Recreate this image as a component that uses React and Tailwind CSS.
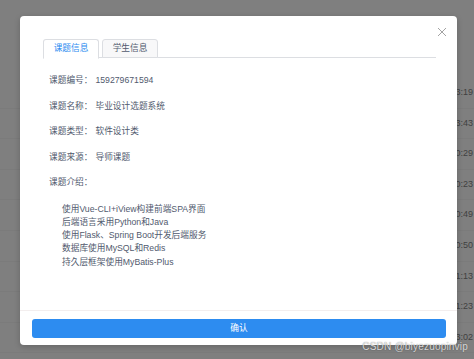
import React from "react";

const bgRows = ["3:19", "3:43", "0:29", "0:23", "0:49", "0:50", "1:13", "1:23", "3:02"];

const intro = [
  "使用Vue-CLI+iView构建前端SPA界面",
  "后端语言采用Python和Java",
  "使用Flask、Spring Boot开发后端服务",
  "数据库使用MySQL和Redis",
  "持久层框架使用MyBatis-Plus",
];

const rows = [
  ["课题编号：", "159279671594"],
  ["课题名称：", "毕业设计选题系统"],
  ["课题类型：", "软件设计类"],
  ["课题来源：", "导师课题"],
  ["课题介绍：", ""],
];

export default function App() {
  return (
    <div
      className="relative w-[474px] h-[359px] overflow-hidden bg-[#7f7f7f]"
      style={{ fontFamily: '"Liberation Sans", "Noto Sans CJK SC", sans-serif' }}
    >
      {/* background table (under mask) */}
      <div className="flex flex-col pt-[78px]">
        {bgRows.map((t, i) => (
          <div key={i} className="h-[30.6px] flex items-center justify-end border-b border-[#7b7b7b] pr-[1px]">
            <span className="text-[9px] text-[#3f3f3f]">{t}</span>
          </div>
        ))}
      </div>

      {/* modal */}
      <div className="absolute left-[20px] top-[16px] w-[437px] h-[329px] bg-white rounded-[4px] shadow-[0_2px_6px_rgba(0,0,0,0.2)] flex flex-col text-[#515a6e]">
        <button className="absolute right-[10px] top-[11px] w-[10px] h-[10px] flex items-center justify-center">
          <svg width="10" height="10" viewBox="0 0 10 10">
            <path d="M1 1 L9 9 M9 1 L1 9" stroke="#999" strokeWidth="0.9" />
          </svg>
        </button>

        <div className="pl-[23px] pr-[21px] pt-[23px]">
          <div className="flex gap-[3px] border-b border-[#dcdee2] h-[19px]">
            <div className="w-[56px] h-[20px] -mb-px flex items-center justify-center border border-[#dcdee2] border-b-white bg-white rounded-t-[3px] text-[#2d8cf0] text-[8.7px]">
              课题信息
            </div>
            <div className="w-[56px] h-[19px] flex items-center justify-center border border-[#dcdee2] bg-[#f8f8f9] rounded-t-[3px] text-[#515a6e] text-[8.7px]">
              学生信息
            </div>
          </div>
        </div>

        <div className="pl-[29px] mt-[10px] flex flex-col text-[8.7px]">
          {rows.map(([l, v], i) => (
            <div key={i} className="h-[25.5px] flex items-center">
              <span>{l}</span>
              <span className="ml-[3px]">{v}</span>
            </div>
          ))}
          <div className="pl-[13px] mt-[7px] flex flex-col leading-[13.25px]">
            {intro.map((t, i) => (
              <div key={i}>{t}</div>
            ))}
          </div>
        </div>

        <div className="mt-auto border-t border-[#f3eeee] pt-[8px] pb-[7px] px-[11px] pl-[12px]">
          <div className="h-[19px] w-full rounded-[3px] bg-[#2d8cf0] flex items-center justify-center text-white text-[8.7px]">
            确认
          </div>
        </div>
      </div>

      {/* watermark */}
      <div className="absolute right-[6px] bottom-[5px] text-[10px] text-white/80 tracking-[0.2px] [text-shadow:0_0_1px_rgba(0,0,0,0.6)]">
        CSDN @biyezuopinvip
      </div>
    </div>
  );
}
